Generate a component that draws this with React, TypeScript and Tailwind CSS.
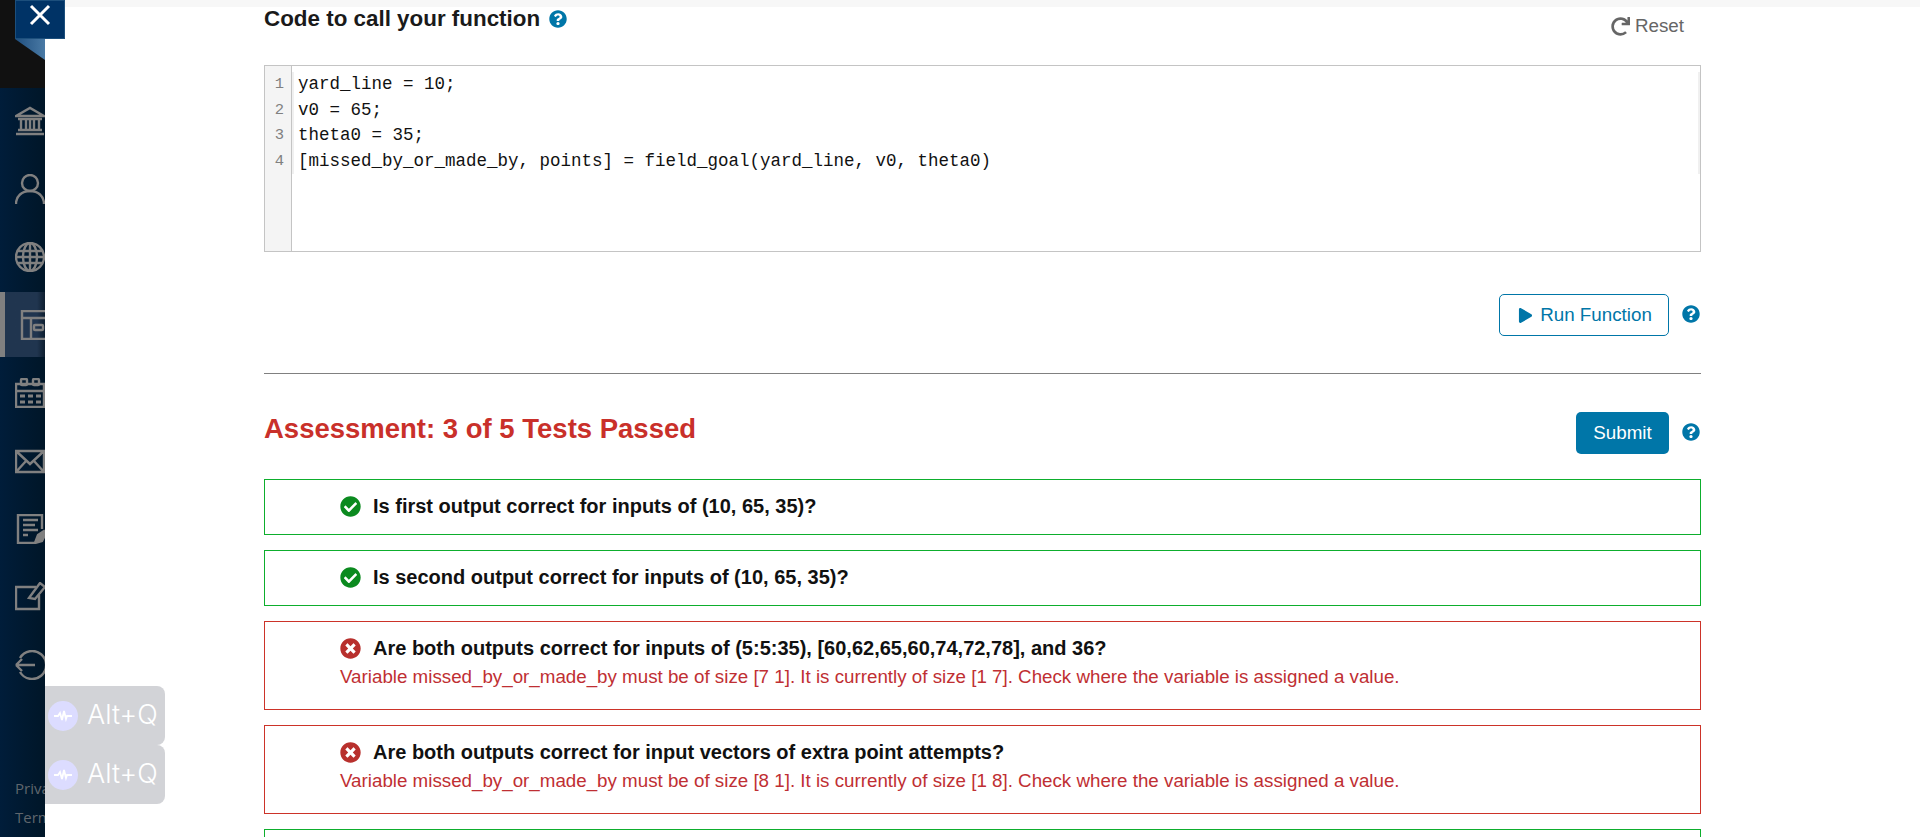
import { FaCheckCircle, FaPlay, FaQuestionCircle, FaRedo, FaTimesCircle } from "react-icons/fa";

const codeLines = [
  "yard_line = 10;",
  "v0 = 65;",
  "theta0 = 35;",
  "[missed_by_or_made_by, points] = field_goal(yard_line, v0, theta0)",
];

const tests = [
  { ok: true, title: "Is first output correct for inputs of (10, 65, 35)?" },
  { ok: true, title: "Is second output correct for inputs of (10, 65, 35)?" },
  {
    ok: false,
    title: "Are both outputs correct for inputs of (5:5:35), [60,62,65,60,74,72,78], and 36?",
    error: "Variable missed_by_or_made_by must be of size [7 1]. It is currently of size [1 7]. Check where the variable is assigned a value.",
  },
  {
    ok: false,
    title: "Are both outputs correct for input vectors of extra point attempts?",
    error: "Variable missed_by_or_made_by must be of size [8 1]. It is currently of size [1 8]. Check where the variable is assigned a value.",
  },
  { ok: true, title: "" },
];

const navIcons = [
  <g key="bank">
    <path d="M1 10 L15 2 L29 10 Z" />
    <path d="M3 13H27M6 13V23M11 13V23M15 13V23M19 13V23M24 13V23M3 24H27M1 28H29" />
  </g>,
  <g key="user">
    <circle cx="15" cy="9" r="8" />
    <path d="M1 30C1 22 7 17 15 17C23 17 29 22 29 30" />
  </g>,
  <g key="globe">
    <circle cx="15" cy="15" r="14" />
    <ellipse cx="15" cy="15" rx="7" ry="14" />
    <path d="M15 1V29M2 9H28M1 15H29M2 21H28" />
  </g>,
  <g key="panel">
    <path d="M8 1H36V29H8ZM8 8H36M17 8V29" />
    <rect x="20" y="15" width="9" height="5" rx="1" />
  </g>,
  <g key="calendar">
    <path d="M1 6H29V29H1ZM1 13H29" />
    <rect x="6" y="1" width="6" height="6" rx="1" />
    <rect x="18" y="1" width="6" height="6" rx="1" />
    <path d="M5 18H10M13 18H18M21 18H26M5 24H10M13 24H18M21 24H26" strokeWidth="3" />
  </g>,
  <g key="mail">
    <path d="M1 5H29V26H1ZM1 5L15 18L29 5M1 26L11 15M29 26L19 15" />
  </g>,
  <g key="note">
    <path d="M27 15V1H3V29H20M8 6H23M8 11H20M8 16H23M8 21H13" />
    <path d="M20 29L23 21L29 17L31 19L27 27Z" fill="#808080" />
  </g>,
  <g key="edit">
    <path d="M21 5H1V27H24V13" />
    <path d="M14 16L25 1L30 5L20 17Z" />
  </g>,
  <g key="logout">
    <path d="M5 8A14 14 0 1 1 5 22M1 15H20M1 15L7 9M1 15L7 21" />
  </g>,
];

function Sidebar() {
  return (
    <aside className="flex h-full w-[45px] shrink-0 flex-col overflow-hidden bg-gradient-to-r from-[#001d3a] to-[#001628]">
      <div className="h-[88px] shrink-0 bg-[#111111]" />
      {navIcons.map((icon, i) => (
        <div
          key={i}
          className={`mb-[3px] flex h-[65px] shrink-0 items-center pt-[1px] ${i === 3 ? "border-l-[5px] border-[#808080] bg-gradient-to-r from-[#20354f] from-80% to-[#0e1f30] pl-[9px]" : "pl-[15px]"}`}
        >
          <svg width="38" height="30" viewBox="0 0 38 30" fill="none" stroke="#808080" strokeWidth="2.4" className="shrink-0">
            {icon}
          </svg>
        </div>
      ))}
      <div className="mt-auto flex flex-col gap-[9px] whitespace-nowrap pb-[10px] pl-[15px] text-[15px] leading-[20px] text-[#5f666d] [font-family:'Open_Sans',sans-serif]">
        <span>Privacy Policy</span>
        <span>Terms of Use</span>
      </div>
    </aside>
  );
}

function HelpIcon({ className }: { className: string }) {
  return <FaQuestionCircle className={`shrink-0 text-[#0076a8] ${className}`} />;
}

function TestRow({ ok, title, error }: { ok: boolean; title: string; error?: string }) {
  return (
    <div className={`border pl-[75px] pt-[12px] ${ok ? "border-[#0dae2d]" : "border-[#cc3329]"} ${error ? "pb-[18.5px]" : "pb-[14px]"}`}>
      <div className="flex h-[28px] items-center">
        {ok ? (
          <FaCheckCircle className="h-[21px] w-[21px] shrink-0 text-[#0b8a1f]" />
        ) : (
          <FaTimesCircle className="h-[21px] w-[21px] shrink-0 text-[#b8302d]" />
        )}
        <span className="ml-[12px] text-[20px] font-bold text-[#111111]">{title}</span>
      </div>
      {error && <p className="mt-[1px] text-[18.75px] leading-[27.5px] text-[#bf2f33]">{error}</p>}
    </div>
  );
}

export default function App() {
  return (
    <div className="relative flex h-[837px] w-[1920px] overflow-hidden bg-white [font-family:'Liberation_Sans',Arial,sans-serif]">
      <Sidebar />

      <main className="min-w-0 flex-1">
        <div className="h-[7px] bg-[#f7f7f7]" />
        <div className="ml-[219px] w-[1437px]">
          <div className="flex h-[58px] items-start justify-between">
            <div className="flex items-center">
              <h2 className="text-[22.4px] font-bold leading-[24px] text-[#1a1a1a]">Code to call your function</h2>
              <HelpIcon className="ml-[9px] h-[18px] w-[18px]" />
            </div>
            <button className="mr-[17px] mt-[7px] flex items-center gap-[5px] text-[18.8px] leading-[24px] text-[#666666]">
              <FaRedo className="h-[19px] w-[19px]" />
              Reset
            </button>
          </div>

          <div className="flex h-[187px] border border-[#c4c4c4] [font-family:'Liberation_Mono',monospace]">
            <div className="w-[27px] shrink-0 border-r border-[#c4c4c4] bg-[#f4f4f4] pr-[7px] pt-[6px] text-right text-[15.5px] leading-[25.6px] text-[#808080]">
              {codeLines.map((_, i) => (
                <div key={i}>{i + 1}</div>
              ))}
            </div>
            <div className="flex-1 pt-[6px]">
              <div className="border-x-2 border-[#f0f0f0] pl-[4px] text-[17.5px] leading-[25.6px] text-[#111111]">
                {codeLines.map((line) => (
                  <div key={line} className="whitespace-pre">
                    {line}
                  </div>
                ))}
              </div>
            </div>
          </div>

          <div className="mt-[42px] flex items-center justify-end">
            <button className="flex h-[42px] w-[170px] items-center justify-center gap-[7px] rounded-[5px] border border-[#0076a8] pl-[2px] text-[18.8px] text-[#0076a8]">
              <FaPlay className="h-[15px] w-[15px]" />
              Run Function
            </button>
            <HelpIcon className="ml-[13px] mr-[1px] -mt-[3px] h-[18px] w-[18px]" />
          </div>

          <hr className="mt-[37px] border-0 border-t border-[#808080]" />

          <div className="mt-[38px] flex items-start justify-between">
            <h2 className="text-[27.5px] font-bold leading-[34px] text-[#c9302a]">Assessment: 3 of 5 Tests Passed</h2>
            <div className="flex items-center">
              <button className="h-[42px] w-[93px] rounded-[5px] bg-[#0076a8] text-[18.8px] text-white">Submit</button>
              <HelpIcon className="ml-[13px] mr-[1px] -mt-[2px] h-[18px] w-[18px]" />
            </div>
          </div>

          <div className="mt-[25px] flex flex-col gap-[15px]">
            {tests.map((t, i) => (
              <TestRow key={i} ok={t.ok} title={t.title} error={t.error} />
            ))}
          </div>
        </div>
      </main>

      {/* close tab hanging over the sidebar */}
      <div className="absolute left-[15px] top-0">
        <div className="flex h-[39px] w-[50px] justify-center border border-[#1c4f7c] bg-[#003366] pt-[3px]">
          <svg width="22" height="22" viewBox="0 0 22 22" fill="none" stroke="white" strokeWidth="3">
            <path d="M2 2L20 20M20 2L2 20" />
          </svg>
        </div>
        <div className="h-[21px] w-[30px] bg-gradient-to-r from-[#1f4f7f] to-[#4a7aa5] [clip-path:polygon(0_0,100%_0,100%_100%)]" />
      </div>

      {/* floating shortcut pills */}
      <div className="absolute left-[45px] top-[686px] flex flex-col">
        {[0, 1].map((i) => (
          <div key={i} className="flex h-[59px] w-[120px] items-center rounded-r-[8px] bg-[#d2d3d7] pl-[3px]">
            <div className="flex h-[30px] w-[30px] items-center justify-center rounded-full bg-[#dcdcff]">
              <svg width="18" height="12" viewBox="0 0 18 12" fill="none" stroke="white" strokeWidth="1.8">
                <path d="M0 6H4L6 3L8 10L10 1L12 9L13 6H18" />
              </svg>
            </div>
            <span className="ml-[9px] text-[27px] font-light text-white [font-family:Inter,sans-serif]">Alt+Q</span>
          </div>
        ))}
      </div>
    </div>
  );
}
